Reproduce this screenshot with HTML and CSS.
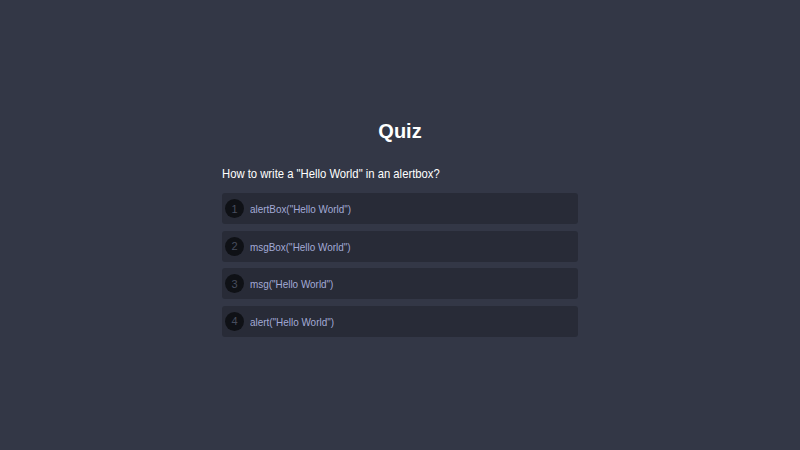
FILE: index.html
```html
<!DOCTYPE html>
<html lang="en">
<head>
<meta charset="utf-8">
<title>Quiz</title>
<link rel="stylesheet" href="styles.css">
</head>
<body>
  <main class="quiz">
    <h1 class="quiz-title">Quiz</h1>
    <p class="question">How to write a "Hello World" in an alertbox?</p>
    <ul class="options">
      <li class="option"><span class="num">1</span><span class="label">alertBox("Hello World")</span></li>
      <li class="option"><span class="num">2</span><span class="label">msgBox("Hello World")</span></li>
      <li class="option"><span class="num">3</span><span class="label">msg("Hello World")</span></li>
      <li class="option"><span class="num">4</span><span class="label">alert("Hello World")</span></li>
    </ul>
  </main>
</body>
</html>
```
FILE: styles.css
```css
html, body {
  margin: 0;
  padding: 0;
  height: 100%;
}

body {
  background: #333746;
  font-family: "Liberation Sans", Arial, sans-serif;
  color: #ffffff;
}

.quiz {
  width: 356px;
  margin: 0 auto;
  padding-top: 118px;
}

.quiz-title {
  margin: 0 0 21px;
  font-size: 20px;
  font-weight: bold;
  text-align: center;
  line-height: 26px;
}

/* slightly condensed body copy */
.question,
.label {
  transform: scaleX(0.855);
  transform-origin: left center;
}

.question {
  margin: 0 0 11px;
  font-size: 13.2px;
  line-height: 17px;
}

.options {
  list-style: none;
  margin: 0;
  padding: 0;
  display: flex;
  flex-direction: column;
  gap: 6.5px;
}

.option {
  display: flex;
  align-items: center;
  height: 31px;
  padding-left: 3px;
  background: #282b37;
  border-radius: 3px;
}

.num {
  width: 19px;
  height: 19px;
  border-radius: 50%;
  background: #0f1116;
  color: #474d5e;
  font-size: 11px;
  display: flex;
  align-items: center;
  justify-content: center;
  margin-right: 6px;
  flex: none;
}

.label {
  display: inline-block;
  font-size: 11.6px;
  color: #a3aad6;
  white-space: nowrap;
}
```
